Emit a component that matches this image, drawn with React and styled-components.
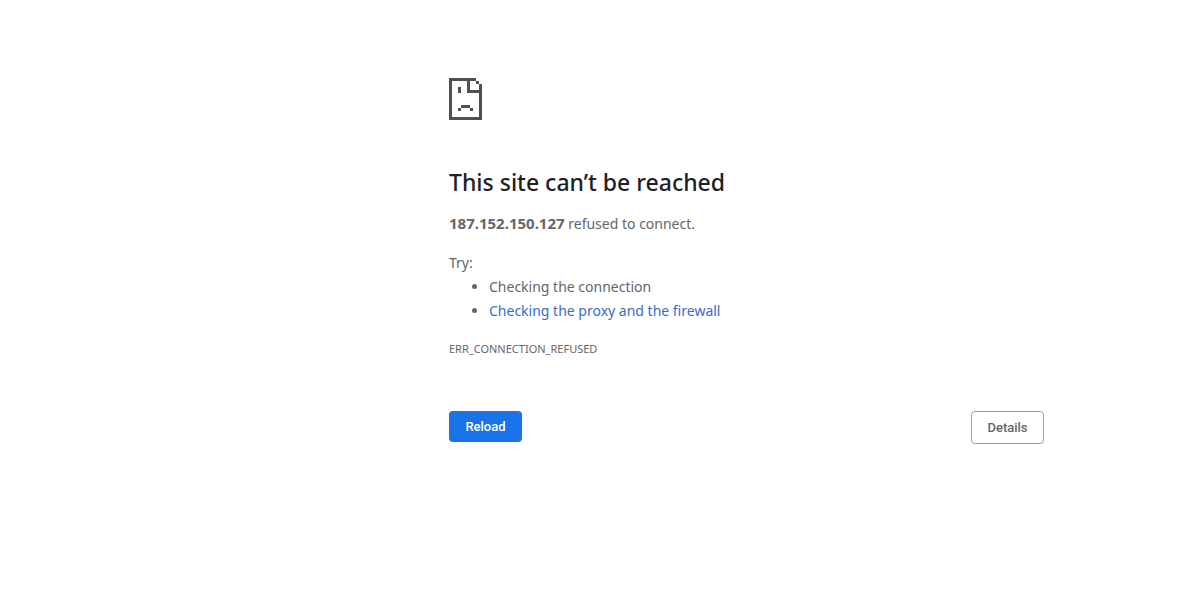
import React from 'react';
import styled, { createGlobalStyle } from 'styled-components';

const GlobalStyle = createGlobalStyle`
  * { box-sizing: border-box; }
  body {
    margin: 0;
    background: #fff;
    color: #646669;
    font-family: "Noto Sans", "Open Sans", sans-serif;
    font-size: 14px;
    line-height: 24px;
  }
`;

const Page = styled.main`
  padding: 78px 156px 48px 449px;

  @media (max-width: 900px) {
    padding: 78px 24px 48px;
  }
`;

const SadPage = styled.svg`
  display: block;
  width: 33px;
  height: 42px;
  margin-bottom: 46px;
  fill: #505050;
`;

const Title = styled.h1`
  margin: 0 0 14px;
  color: #202124;
  font-family: "Noto Sans", "Open Sans", sans-serif;
  font-size: 23px;
  font-weight: 500;
  line-height: 32px;
`;

const Summary = styled.p`
  margin: 0 0 15px;
`;

const Host = styled.strong`
  font-size: 15px;
  line-height: 20px;
`;

const Suggestions = styled.ul`
  margin: 0 0 14px;
  padding-left: 40px;
`;

const Hint = styled.p`
  margin: 0;
`;

const HelpLink = styled.a`
  color: #3a6cc8;
  text-decoration: none;
`;

const ErrorCode = styled.p`
  margin: 0 0 50px;
  font-size: 11px;
`;

const Actions = styled.div`
  display: flex;
  justify-content: space-between;
  align-items: flex-start;
`;

const Button = styled.button`
  width: 73px;
  height: ${({ $primary }) => ($primary ? '31px' : '33px')};
  padding: 0;
  border: ${({ $primary }) => ($primary ? '0' : '1px solid #9aa0a6')};
  border-radius: 4px;
  background: ${({ $primary }) => ($primary ? '#1a73e8' : '#fff')};
  color: ${({ $primary }) => ($primary ? '#fff' : '#646669')};
  font-family: Roboto, "Liberation Sans", sans-serif;
  font-size: 13px;
  font-weight: 500;
  cursor: pointer;
`;

export default function App() {
  return (
    <>
      <GlobalStyle />
      <Page>
        <SadPage viewBox="0 0 11 14" shapeRendering="crispEdges" aria-hidden="true">
          <path d="M0 0H9V1H7V4H11V14H0ZM1 1V13H10V5H6V1Z" fillRule="evenodd" />
          <path d="M9 1h1v1H9zM10 2h1v2h-1zM3 3h1v2H3zM4 9h3v1H4zM3 10h1v1H3zM7 10h1v1H7z" />
        </SadPage>
        <Title>This site can’t be reached</Title>
        <Summary>
          <Host>187.152.150.127</Host> refused to connect.
        </Summary>
        <Hint>Try:</Hint>
        <Suggestions>
          <li>Checking the connection</li>
          <li>
            <HelpLink href="#firewall">Checking the proxy and the firewall</HelpLink>
          </li>
        </Suggestions>
        <ErrorCode>ERR_CONNECTION_REFUSED</ErrorCode>
        <Actions>
          <Button type="button" $primary>Reload</Button>
          <Button type="button">Details</Button>
        </Actions>
      </Page>
    </>
  );
}
